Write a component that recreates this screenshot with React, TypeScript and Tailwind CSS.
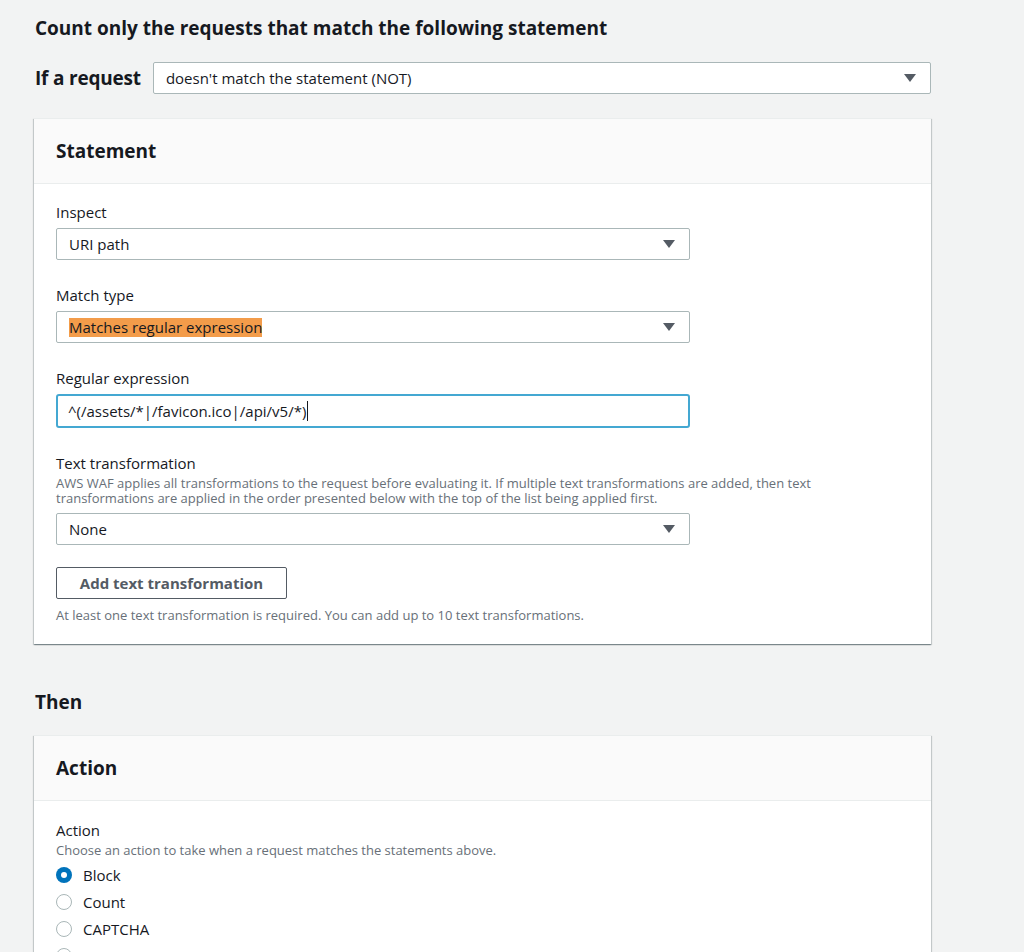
import React from "react";

const Caret = () => (
  <svg width="12" height="8" viewBox="0 0 12 8" className="shrink-0">
    <path d="M0 0h12L6 8z" fill="#545b64" />
  </svg>
);

const Select = ({ value, highlight = false, wide = false }: { value: string; highlight?: boolean; wide?: boolean }) => (
  <div
    className={`flex h-8 items-center justify-between rounded-[2px] border border-[#aab7b8] bg-white pl-3 pr-[14px] text-[15px] text-[#16191f] ${
      wide ? "flex-1" : "w-[634px]"
    }`}
  >
    <span className={highlight ? "bg-[#f39c4a] leading-[19px]" : "leading-[20px]"}>{value}</span>
    <Caret />
  </div>
);

const Field = ({ label, children }: { label: string; children: React.ReactNode }) => (
  <div className="flex flex-col">
    <div className="mb-[6px] text-[15px] leading-[20px] text-[#16191f]">{label}</div>
    {children}
  </div>
);

const Card = ({ title, children }: { title: string; children: React.ReactNode }) => (
  <div className="w-[897px] border-t border-[#eaeded] bg-white shadow-[0_1px_1px_0_rgba(0,28,36,0.3),1px_1px_1px_0_rgba(0,28,36,0.15),-1px_1px_1px_0_rgba(0,28,36,0.15)]">
    <div className="flex h-[65px] items-center border-b border-[#eaeded] bg-[#fafafa] px-[22px]">
      <h2 className="text-[19px] font-bold leading-[26px] text-[#16191f]">{title}</h2>
    </div>
    <div className="px-[22px] pb-5 pt-[18px]">{children}</div>
  </div>
);

const Radio = ({ label, checked = false }: { label?: string; checked?: boolean }) => (
  <div className="flex h-[27px] items-center gap-[11px]">
    {checked ? (
      <span className="flex h-4 w-4 items-center justify-center rounded-full bg-[#0073bb]">
        <span className="h-[6px] w-[6px] rounded-full bg-white" />
      </span>
    ) : (
      <span className="h-4 w-4 rounded-full border-[1.5px] border-[#aab7b8] bg-white" />
    )}
    {label && <span className="text-[15px] leading-[20px] text-[#16191f]">{label}</span>}
  </div>
);

export default function App() {
  return (
    <div className="min-h-[952px] overflow-hidden bg-[#f2f3f3] pl-[34px] pt-[15px] font-['Open_Sans',sans-serif] text-[#16191f]">
      <h1 className="ml-px text-[19px] font-bold leading-[26px]">Count only the requests that match the following statement</h1>

      <div className="mt-[21px] flex w-[897px] items-center gap-3">
        <span className="ml-px text-[19px] font-bold leading-[26px] tracking-[-0.2px]">If a request</span>
        <Select value="doesn't match the statement (NOT)" wide />
      </div>

      <div className="mt-6">
        <Card title="Statement">
          <div className="flex flex-col gap-[25px]">
            <Field label="Inspect">
              <Select value="URI path" />
            </Field>
            <Field label="Match type">
              <Select value="Matches regular expression" highlight />
            </Field>
            <Field label="Regular expression">
              <div className="flex h-[34px] w-[634px] items-center rounded-[3px] border-2 border-[#44a8d2] bg-white pl-[10px] text-[15px]">
                <span className="leading-[20px]">^(/assets/*|/favicon.ico|/api/v5/*)</span>
                <span className="ml-px h-[20px] w-px bg-[#16191f]" />
              </div>
            </Field>
            <div className="flex flex-col">
              <div className="mb-[3px] text-[15px] leading-[20px]">Text transformation</div>
              <p className="mb-[7px] w-[800px] text-[13px] leading-[15px] text-[#687078]">
                AWS WAF applies all transformations to the request before evaluating it. If multiple text transformations are added, then text transformations are applied in the order presented below with the top of the list being applied first.
              </p>
              <Select value="None" />
            </div>
          </div>
          <button className="mt-[22px] flex h-8 w-[231px] items-center justify-center rounded-[2px] border border-[#545b64] bg-white text-[15px] font-bold text-[#545b64]">
            Add text transformation
          </button>
          <p className="mt-[7px] text-[13px] leading-[18px] text-[#687078]">
            At least one text transformation is required. You can add up to 10 text transformations.
          </p>
        </Card>
      </div>

      <h2 className="ml-px mt-[45px] text-[19px] font-bold leading-[26px]">Then</h2>

      <div className="mt-[20px]">
        <Card title="Action">
          <div className="mt-px text-[15px] leading-[20px]">Action</div>
          <p className="mt-[2px] text-[13px] leading-[16px] text-[#687078]">Choose an action to take when a request matches the statements above.</p>
          <div className="mt-[3px] flex flex-col">
            <Radio label="Block" checked />
            <Radio label="Count" />
            <Radio label="CAPTCHA" />
            <Radio />
          </div>
        </Card>
      </div>
    </div>
  );
}
